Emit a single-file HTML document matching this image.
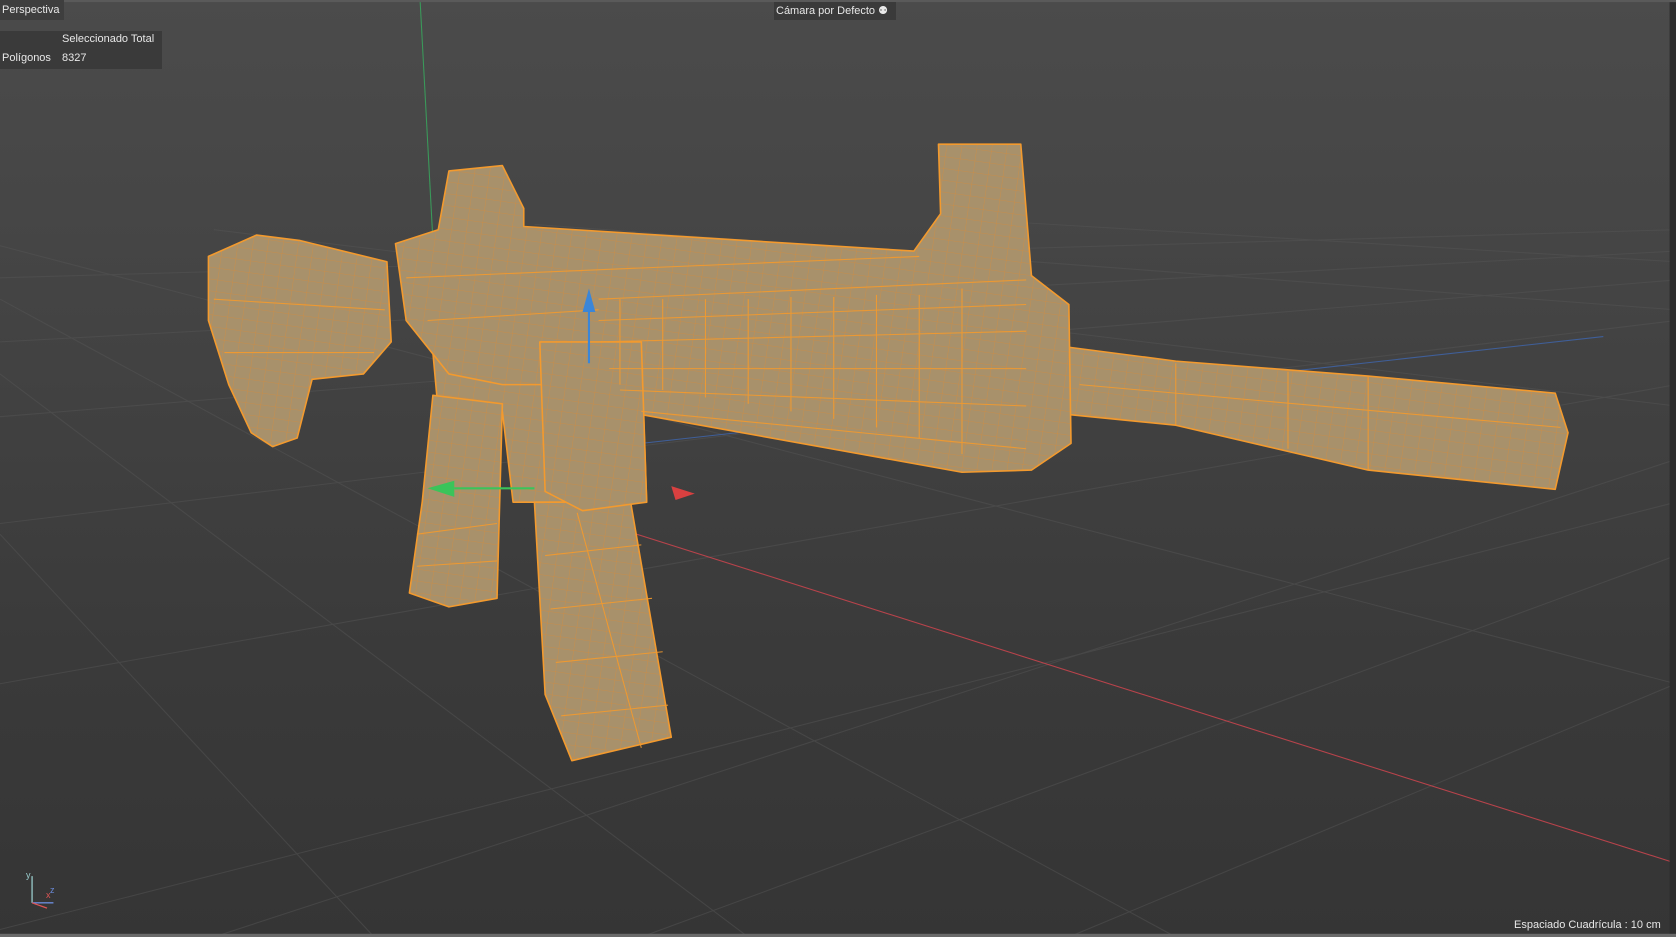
<!DOCTYPE html>
<html><head><meta charset="utf-8"><style>
html,body{margin:0;padding:0;width:1676px;height:937px;overflow:hidden;background:#3c3c3c;font-family:"Liberation Sans",sans-serif}
.vp{position:absolute;left:0;top:0;width:1676px;height:937px;background:linear-gradient(#4b4b4b 0%,#434343 35%,#3a3a3a 70%,#353535 100%)}
svg{position:absolute;left:0;top:0}
.t{position:absolute;color:#e8e8e8;font-size:11px;white-space:nowrap}
</style></head><body>
<div class="vp"></div>
<svg width="1676" height="937" viewBox="0 0 1568 877" preserveAspectRatio="none">
<defs>
<pattern id="w" width="14" height="11" patternUnits="userSpaceOnUse" patternTransform="rotate(8)">
<rect width="14" height="11" fill="#a8916b"/>
<path d="M0 0 H14 M0 0 V11" stroke="#e08a30" stroke-width="0.7" opacity="0.7"/>
</pattern>
</defs>
<g stroke="#555" stroke-width="1" fill="none" opacity="0.5">
<path d="M0 260 L1568 215"/><path d="M0 320 L1568 235"/><path d="M0 390 L1568 262"/><path d="M0 490 L1568 300"/><path d="M0 640 L1568 360"/><path d="M0 870 L1568 470"/>
<path d="M0 230 L1568 640"/><path d="M0 280 L1100 877"/><path d="M0 350 L700 877"/><path d="M0 500 L350 877"/><path d="M200 215 L1568 380"/><path d="M500 210 L1568 290"/><path d="M900 205 L1568 245"/>
<path d="M1000 877 L1568 640"/><path d="M600 877 L1568 520"/><path d="M200 877 L1568 430"/>
</g>
<path d="M393 0 L405 225" stroke="#3a9a5a" stroke-width="1"/>
<path d="M580 495 L1568 808" stroke="#b8434b" stroke-width="1"/>
<path d="M600 415 L1500 315" stroke="#3f5f9a" stroke-width="1"/>
<g fill="url(#w)" stroke="#f39a2e" stroke-width="1.5" stroke-linejoin="round">
<path d="M1000 325 L1100 338 L1280 352 L1455 368 L1467 405 L1455 458 L1280 440 L1100 398 L1000 388 Z"/>
<path d="M195 240 L240 220 L280 225 L362 245 L366 320 L340 350 L292 355 L278 410 L255 418 L235 405 L214 360 L195 300 Z"/>
<path d="M405 330 L510 320 L600 330 L605 470 L480 470 L470 385 L410 385 Z"/>
<path d="M405 370 L470 378 L465 560 L420 568 L383 555 L395 470 Z"/>
<path d="M500 470 L590 470 L628 690 L535 712 L510 650 Z"/>
<path d="M370 228 L410 215 L420 160 L470 155 L490 195 L490 212 L855 235 L880 200 L878 135 L955 135 L965 258 L1000 285 L1002 415 L965 440 L900 442 L600 388 L550 360 L470 360 L420 350 L380 300 Z"/>
<path d="M505 320 L600 320 L605 470 L545 478 L510 460 Z"/>
</g>
<g stroke="#f39a2e" stroke-width="1" fill="none" opacity="0.9">
<path d="M560 280 L960 262 M560 300 L960 285 M560 320 L960 310 M570 345 L960 345 M580 365 L960 380 M600 385 L960 420"/>
<path d="M580 280 L580 360 M620 280 L620 365 M660 280 L660 372 M700 280 L700 378 M740 278 L740 385 M780 278 L780 392 M820 276 L820 400 M860 276 L860 410 M900 270 L900 425"/>
<path d="M1100 340 L1100 398 M1205 348 L1205 420 M1280 352 L1280 440 M1010 360 L1460 400"/>
<path d="M380 260 L860 240 M400 300 L560 290 M200 280 L360 290 M210 330 L350 330"/>
<path d="M510 520 L600 510 M515 570 L610 560 M520 620 L620 610 M525 670 L625 660 M540 480 L600 700 M390 500 L465 490 M390 530 L465 525"/>
</g>
<path d="M551 270 L545 292 L557 292 Z" fill="#3a86d8"/><path d="M551 292 V340" stroke="#3a86d8" stroke-width="2"/>
<path d="M400 457 L425 450 L425 465 Z" fill="#3ac45a"/><path d="M425 457 H500" stroke="#3ac45a" stroke-width="2"/>
<path d="M628 455 L650 462 L632 468 Z" fill="#d84040"/>
<g stroke-width="1.2" fill="none"><path d="M30 845 V820" stroke="#9cc"/><path d="M30 845 H50" stroke="#6a8ad8"/><path d="M30 845 L44 850" stroke="#d55"/></g>
<rect x="1562" y="0" width="6" height="877" fill="#2e2e2e"/>
<rect x="0" y="874" width="1568" height="3" fill="#6a6a6a"/>
<rect x="0" y="0" width="1568" height="2" fill="#5a5a5a"/>
</svg>
<div style="position:absolute;left:0;top:0;width:64px;height:20px;background:#3e3e3e"></div>
<div class="t" style="left:2px;top:4px">Perspectiva</div>
<div style="position:absolute;left:0;top:31px;width:162px;height:38px;background:#3a3a3a"></div>
<div class="t" style="left:62px;top:33px">Seleccionado Total</div>
<div class="t" style="left:2px;top:52px">Polígonos</div>
<div class="t" style="left:62px;top:52px">8327</div>
<div style="position:absolute;left:774px;top:2px;width:122px;height:18px;background:#3a3a3a"></div>
<div class="t" style="left:776px;top:4px">Cámara por Defecto ⚉</div>
<div class="t" style="left:1514px;top:919px">Espaciado Cuadrícula : 10 cm</div>
<div class="t" style="left:26px;top:870px;font-size:9px;color:#9cc">y</div>
<div class="t" style="left:46px;top:890px;font-size:9px;color:#d55">x</div>
<div class="t" style="left:50px;top:885px;font-size:9px;color:#6a8ad8">z</div>
</body></html>
